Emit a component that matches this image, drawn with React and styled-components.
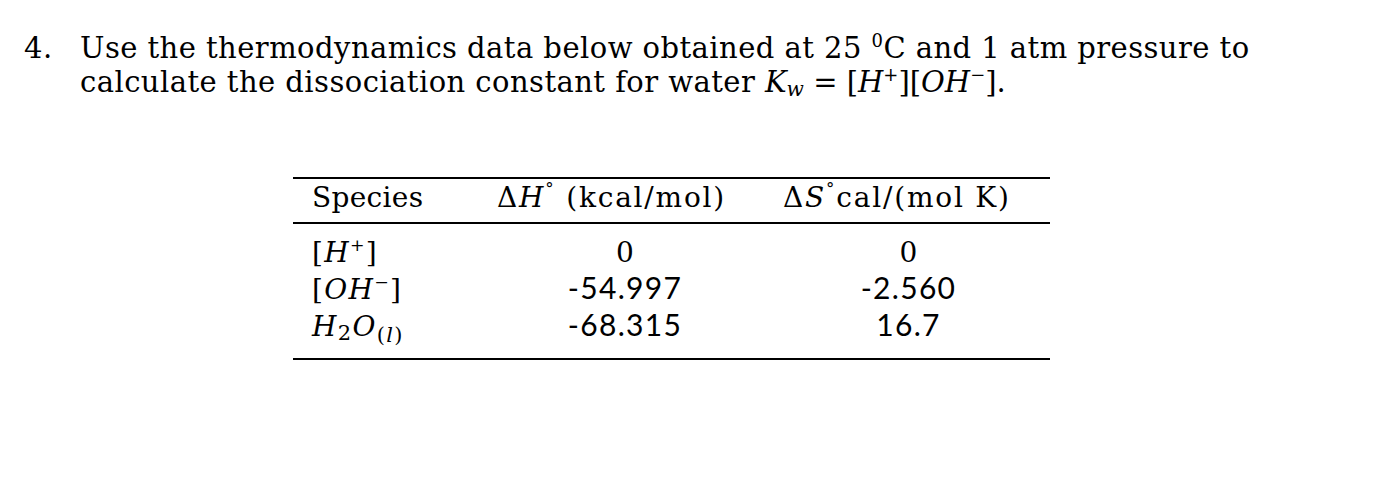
import React from "react";
import styled, { createGlobalStyle } from "styled-components";

const Global = createGlobalStyle`
  html, body { margin: 0; padding: 0; background: #fff; }
  body { font-family: "DejaVu Serif", "Liberation Serif", serif; color: #000; }
`;

const Page = styled.div`
  width: 1388px;
  height: 482px;
  box-sizing: border-box;
  padding: 31px 0 0 24px;
  background: #fff;
`;

const Question = styled.div`
  display: flex;
  font-size: 29px;
  line-height: 34px;
  letter-spacing: 0.45px;
`;

const Num = styled.div`
  width: 56px;
  flex: none;
`;

const Body = styled.div`
  display: flex;
  flex-direction: column;
`;

const MathPart = styled.span`
  letter-spacing: 0;
`;

const I = styled.i`
  font-style: italic;
`;

const Sup = styled.sup`
  font-size: ${(p) => p.$size || "0.62em"};
  line-height: 0;
  vertical-align: ${(p) => p.$up || "0.62em"};
`;

const Sub = styled.sub`
  font-size: ${(p) => p.$size || "0.7em"};
  line-height: 0;
  vertical-align: ${(p) => p.$down || "-0.22em"};
`;

const TableWrap = styled.div`
  margin: 78px 0 0 269px;
`;

const Table = styled.table`
  border-collapse: collapse;
  border-top: 2px solid #000;
  border-bottom: 2px solid #000;
  line-height: 34px;
`;

const HeadCell = styled.th`
  font-weight: normal;
  font-size: 28px;
  letter-spacing: ${(p) => p.$ls || "0.3px"};
  padding: 2px 0 7px ${(p) => p.$pl};
  box-sizing: border-box;
  text-align: left;
  vertical-align: baseline;
  width: ${(p) => p.$w};
  border-bottom: 2px solid #000;
  white-space: nowrap;
`;

const Row = styled.tr`
  & > td {
    padding-top: ${(p) => p.$pt || "0"};
    padding-bottom: ${(p) => p.$pb || "0"};
  }
`;

const Cell = styled.td`
  font-size: ${(p) => (p.$sans ? "30px" : "28px")};
  font-family: ${(p) =>
    p.$sans ? `"Lato", "Open Sans", sans-serif` : `"DejaVu Serif", serif`};
  letter-spacing: ${(p) => (p.$sans ? "1.3px" : p.$left ? "1.3px" : "0")};
  padding-left: ${(p) => (p.$left ? "19px" : "0")};
  padding-right: 0;
  text-align: ${(p) => (p.$left ? "left" : "center")};
  vertical-align: baseline;
  white-space: nowrap;
`;

export default function App() {
  return (
    <Page>
      <Global />
      <Question>
        <Num>4.</Num>
        <Body>
          <span>
            Use the thermodynamics data below obtained at 25 <Sup>0</Sup>C and 1
            atm pressure to
          </span>
          <span>
            calculate the dissociation constant for water{" "}
            <MathPart>
              <I>K</I>
              <Sub>
                <I>w</I>
              </Sub>{" "}
              = [<I>H</I>
              <Sup>+</Sup>][<I>OH</I>
              <Sup>−</Sup>].
            </MathPart>
          </span>
        </Body>
      </Question>
      <TableWrap>
        <Table>
          <thead>
            <tr>
              <HeadCell $w="190px" $pl="19px">
                Species
              </HeadCell>
              <HeadCell $w="284px" $pl="14px" $ls="1.8px">
                Δ<I>H</I>
                <Sup $size="0.6em" $up="0.75em">°</Sup> (kcal/mol)
              </HeadCell>
              <HeadCell $w="283px" $pl="16px" $ls="1.8px">
                Δ<I>S</I>
                <Sup $size="0.6em" $up="0.75em">°</Sup>cal/(mol K)
              </HeadCell>
            </tr>
          </thead>
          <tbody>
            <Row $pt="12px">
              <Cell $left>
                [<I>H</I>
                <Sup>+</Sup>]
              </Cell>
              <Cell>0</Cell>
              <Cell>0</Cell>
            </Row>
            <Row>
              <Cell $left>
                [<I>OH</I>
                <Sup>−</Sup>]
              </Cell>
              <Cell $sans>-54.997</Cell>
              <Cell $sans>-2.560</Cell>
            </Row>
            <Row $pb="14px">
              <Cell $left>
                <I>H</I>
                <Sub $size="0.75em" $down="-0.2em">2</Sub>
                <I>O</I>
                <Sub $size="0.75em" $down="-0.3em">
                  (<I>l</I>)
                </Sub>
              </Cell>
              <Cell $sans>-68.315</Cell>
              <Cell $sans>16.7</Cell>
            </Row>
          </tbody>
        </Table>
      </TableWrap>
    </Page>
  );
}
